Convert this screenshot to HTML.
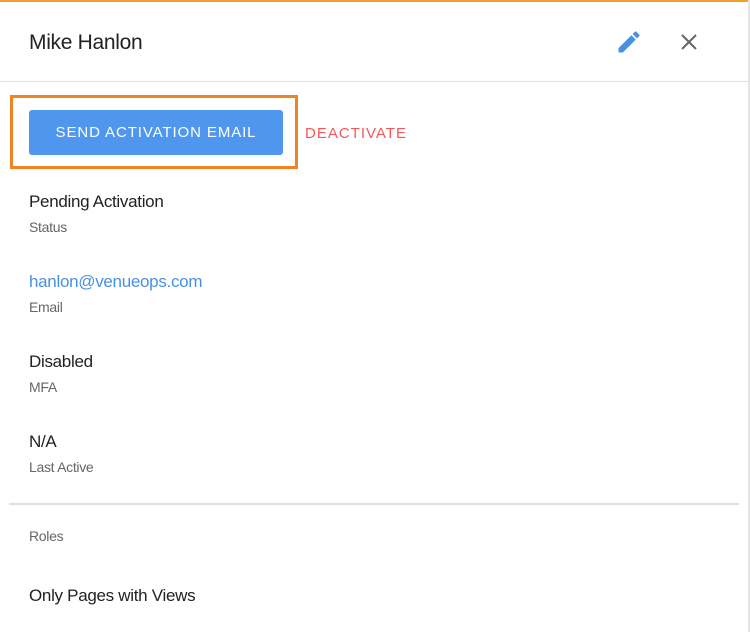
<!DOCTYPE html>
<html><head><style>
*{margin:0;padding:0;box-sizing:border-box}
body{width:750px;height:632px;background:#fff;font-family:"Liberation Sans",sans-serif;position:relative;overflow:hidden}
.a{position:absolute;white-space:nowrap}
.v{font-size:17px;color:#222;letter-spacing:-0.3px}
.l{font-size:14px;color:#666;letter-spacing:-0.3px}
</style></head><body>
<div class="a" style="left:0;top:0;width:750px;height:2px;background:#f0a030"></div>
<div class="a" style="left:748px;top:0;width:2px;height:632px;background:#e4e4e4"></div>
<div class="a" style="left:29px;top:31px;font-size:21px;color:#222;letter-spacing:-0.3px">Mike Hanlon</div>
<svg class="a" style="left:615px;top:28px" width="28" height="28" viewBox="0 0 24 24"><path fill="#4a90e2" d="M3 17.25V21h3.75L17.81 9.94l-3.75-3.75L3 17.25zM20.71 7.04a1 1 0 000-1.41l-2.34-2.34a1 1 0 00-1.41 0l-1.83 1.83 3.75 3.75 1.83-1.83z"/></svg>
<svg class="a" style="left:680px;top:33px" width="18" height="18" viewBox="0 0 18 18"><path d="M2 2L16 16M16 2L2 16" stroke="#666" stroke-width="2"/></svg>
<div class="a" style="left:0;top:81px;width:748px;height:1px;background:#e0e0e0"></div>
<div class="a" style="left:10px;top:95px;width:288px;height:74px;border:3px solid #f08422"></div>
<div class="a" style="left:29px;top:110px;width:254px;height:45px;background:#4f97ee;border-radius:3px;color:#fff;font-size:15px;letter-spacing:0.9px;text-align:center;line-height:46px">SEND ACTIVATION EMAIL</div>
<div class="a" style="left:305px;top:125px;font-size:15px;color:#f05a5a;letter-spacing:1px">DEACTIVATE</div>
<div class="a v" style="left:29px;top:192px">Pending Activation</div>
<div class="a l" style="left:29px;top:219px">Status</div>
<div class="a v" style="left:29px;top:272px;color:#4a90e2">hanlon@venueops.com</div>
<div class="a l" style="left:29px;top:299px">Email</div>
<div class="a v" style="left:29px;top:352px">Disabled</div>
<div class="a l" style="left:29px;top:379px">MFA</div>
<div class="a v" style="left:29px;top:432px">N/A</div>
<div class="a l" style="left:29px;top:459px">Last Active</div>
<div class="a" style="left:9px;top:503px;width:730px;height:2px;background:#e0e0e0"></div>
<div class="a l" style="left:29px;top:528px">Roles</div>
<div class="a v" style="left:29px;top:586px">Only Pages with Views</div>
</body></html>
